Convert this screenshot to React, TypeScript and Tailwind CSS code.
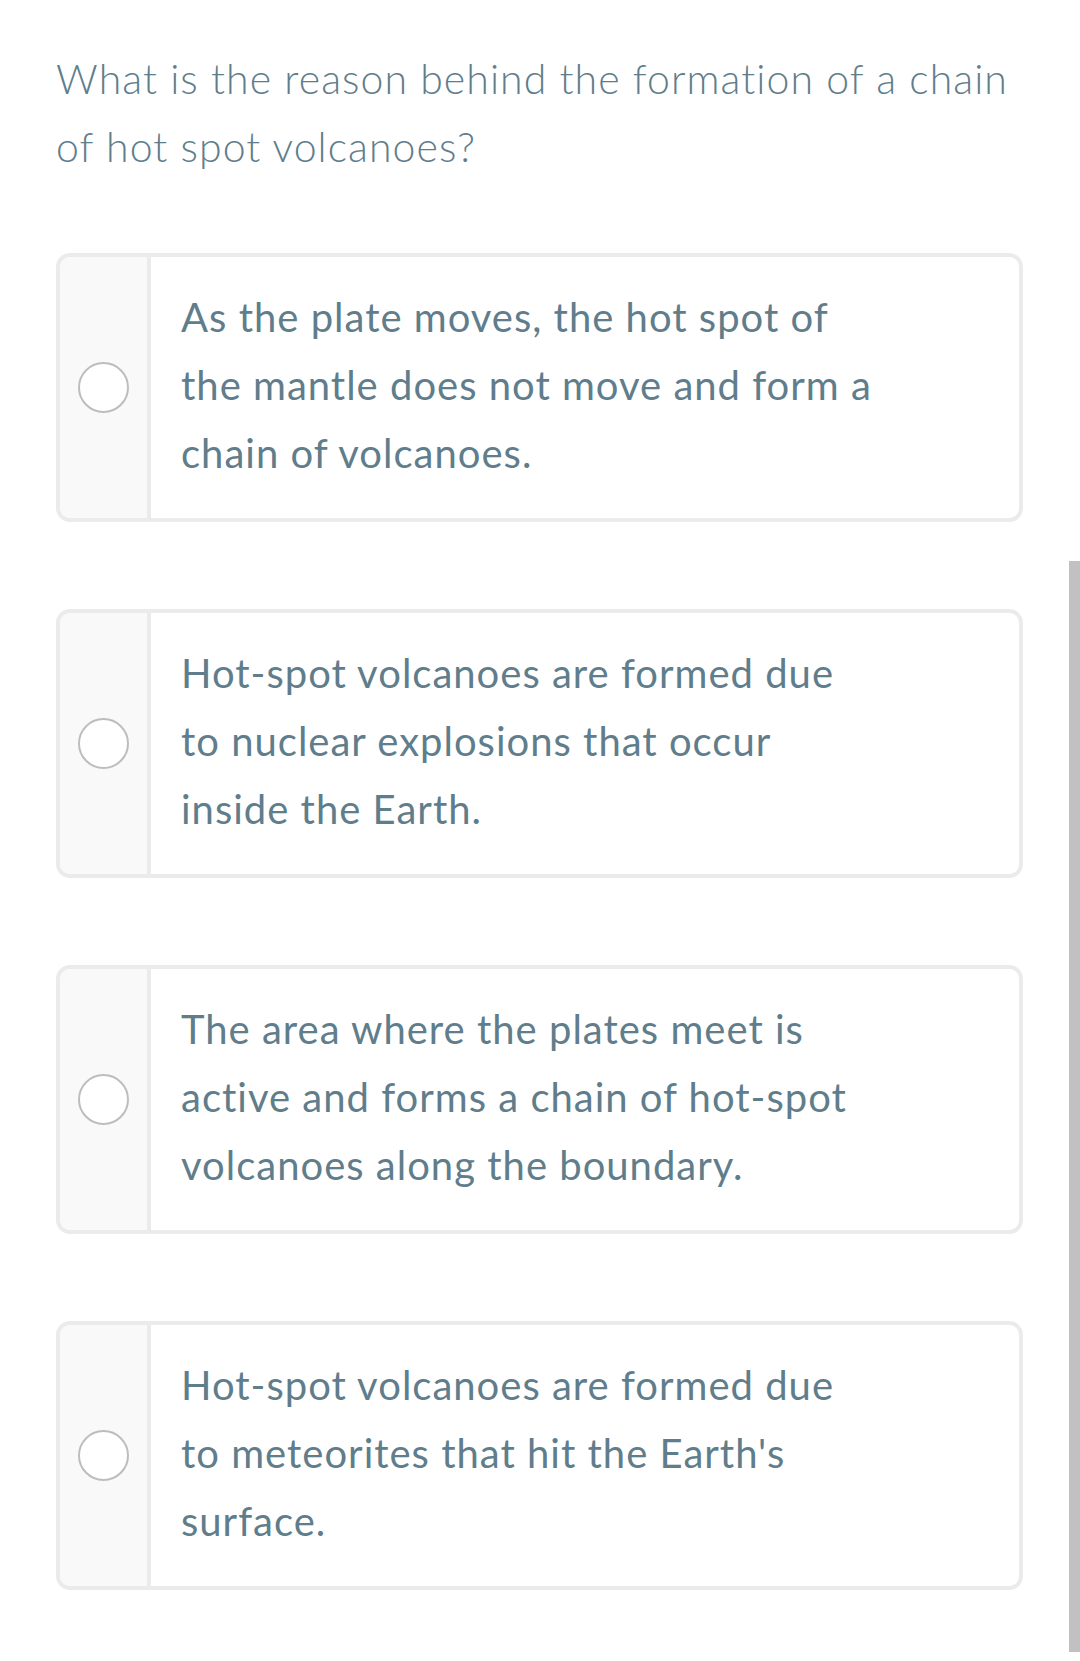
import React from "react";

const options: string[][] = [
  ["As the plate moves, the hot spot of", "the mantle does not move and form a", "chain of volcanoes."],
  ["Hot-spot volcanoes are formed due", "to nuclear explosions that occur", "inside the Earth."],
  ["The area where the plates meet is", "active and forms a chain of hot-spot", "volcanoes along the boundary."],
  ["Hot-spot volcanoes are formed due", "to meteorites that hit the Earth's", "surface."],
];

export default function App() {
  return (
    <div
      className="relative w-[1080px] h-[1661px] bg-white overflow-hidden"
      style={{ fontFamily: "Lato, 'Noto Sans', sans-serif" }}
    >
      <div className="pl-[56px] pr-[57px] pt-[45px]">
        <div className="text-[41px] leading-[68px] tracking-[1.05px] text-[#607d8b] font-light">
          <div className="whitespace-nowrap">What is the reason behind the formation of a chain</div>
          <div className="whitespace-nowrap">of hot spot volcanoes?</div>
        </div>
        <div className="mt-[72px] flex flex-col gap-[87px]">
          {options.map((lines, i) => (
            <div
              key={i}
              className="flex h-[269px] border-4 border-[#ebebeb] rounded-[14px] overflow-hidden"
            >
              <div className="w-[91px] shrink-0 bg-[#f9f9f9] border-r-4 border-[#ebebeb] flex items-center justify-center">
                <div className="w-[51px] h-[51px] rounded-full border-2 border-[#bdbdbd] bg-white" />
              </div>
              <div className="flex-1 bg-white pl-[30px] pt-[26px] text-[40px] leading-[68px] tracking-[1px] text-[#607d8b]">
                {lines.map((l, j) => (
                  <div key={j} className="whitespace-nowrap">{l}</div>
                ))}
              </div>
            </div>
          ))}
        </div>
      </div>
      <div className="absolute left-[1069px] top-[561px] w-[11px] h-[1091px] bg-[#c1c1c1]" />
    </div>
  );
}
